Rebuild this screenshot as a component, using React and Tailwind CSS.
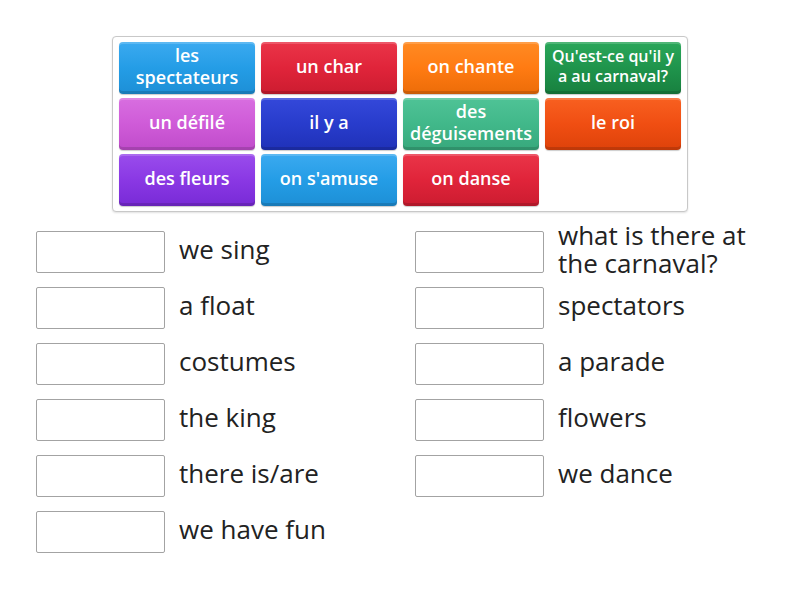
import React from "react";

const tiles = [
  { t: ["les", "spectateurs"], c: "from-[#3aaaf0] via-[#249de6] to-[#1d8fd6]", s: "text-[18px] leading-[22px]" },
  { t: ["un char"], c: "from-[#ea3448] via-[#e0243a] to-[#cc1c30]", s: "text-[18px] leading-[22px]" },
  { t: ["on chante"], c: "from-[#ff8a22] via-[#ff7b12] to-[#ec6c08]", s: "text-[18px] leading-[22px]" },
  { t: ["Qu'est-ce qu'il y", "a au carnaval?"], c: "from-[#2aa75a] via-[#1f944c] to-[#18803f]", s: "text-[16px] leading-[20px]" },
  { t: ["un défilé"], c: "from-[#d86ee0] via-[#cf5bd8] to-[#c04ccb]", s: "text-[18px] leading-[22px]" },
  { t: ["il y a"], c: "from-[#3448da] via-[#283ccc] to-[#1f31b8]", s: "text-[18px] leading-[22px]" },
  { t: ["des", "déguisements"], c: "from-[#4fc396] via-[#41b88a] to-[#37a87c]", s: "text-[18px] leading-[22px]" },
  { t: ["le roi"], c: "from-[#f86020] via-[#f04e12] to-[#de420a]", s: "text-[18px] leading-[22px]" },
  { t: ["des fleurs"], c: "from-[#9a4cec] via-[#8a38e4] to-[#782ad6]", s: "text-[18px] leading-[22px]" },
  { t: ["on s'amuse"], c: "from-[#3aaaf0] via-[#249de6] to-[#1d8fd6]", s: "text-[18px] leading-[22px]" },
  { t: ["on danse"], c: "from-[#ea3448] via-[#e0243a] to-[#cc1c30]", s: "text-[18px] leading-[22px]" },
];

const left = [["we sing"], ["a float"], ["costumes"], ["the king"], ["there is/are"], ["we have fun"]];
const right = [["what is there at", "the carnaval?"], ["spectators"], ["a parade"], ["flowers"], ["we dance"]];

function Row({ lines }) {
  return (
    <div className="flex h-[42px] items-center">
      <div className="h-[42px] w-[129px] shrink-0 rounded-[2px] border border-[#a3a3a3] bg-white" />
      <div className="ml-[14px] mb-[7px] text-[26px] leading-[28px] text-[#222]">
        {lines.map((l, i) => (
          <div key={i} className="whitespace-nowrap">{l}</div>
        ))}
      </div>
    </div>
  );
}

export default function App() {
  return (
    <div className="h-[600px] w-[800px] bg-white" style={{ fontFamily: "'Open Sans', 'Noto Sans', sans-serif" }}>
      <div className="h-[36px]" />
      <div className="mx-auto w-[576px] rounded-[4px] border border-[#c8c8c8] bg-white px-[6px] pt-[5px] pb-[5px] shadow-[0_1px_2px_rgba(0,0,0,0.12)]">
        <div className="grid grid-cols-[repeat(4,136px)] gap-x-[6px] gap-y-[4px]">
          {tiles.map((tile, i) => (
            <div
              key={i}
              className={`flex h-[52px] flex-col items-center justify-center rounded-[4px] bg-linear-to-b pb-[4px] ${tile.c} ${tile.s} text-center font-semibold text-white shadow-[inset_0_2px_0_rgba(255,255,255,0.18),inset_0_-3px_0_rgba(0,0,0,0.14),0_1px_1px_rgba(0,0,0,0.2)]`}
            >
              {tile.t.map((l, j) => (
                <div key={j} className="whitespace-nowrap">{l}</div>
              ))}
            </div>
          ))}
        </div>
      </div>
      <div className="mt-[19px] grid grid-cols-[379px_379px] pl-[36px]">
        <div className="flex flex-col gap-[14px]">
          {left.map((l, i) => (
            <Row key={i} lines={l} />
          ))}
        </div>
        <div className="flex flex-col gap-[14px]">
          {right.map((l, i) => (
            <Row key={i} lines={l} />
          ))}
        </div>
      </div>
    </div>
  );
}
